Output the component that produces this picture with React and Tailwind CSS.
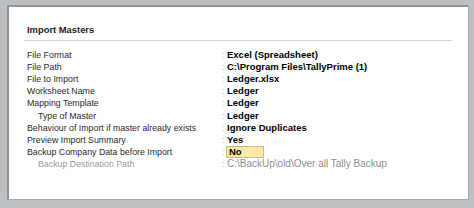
export default function App() {
  const rows = [
    { label: "File Format", value: "Excel (Spreadsheet)" },
    { label: "File Path", value: "C:\\Program Files\\TallyPrime (1)" },
    { label: "File to Import", value: "Ledger.xlsx" },
    { label: "Worksheet Name", value: "Ledger" },
    { label: "Mapping Template", value: "Ledger" },
    { label: "Type of Master", value: "Ledger", indent: true },
    { label: "Behaviour of Import if master already exists", value: "Ignore Duplicates" },
    { label: "Preview Import Summary", value: "Yes" },
    { label: "Backup Company Data before Import", value: "No", active: true },
    { label: "Backup Destination Path", value: "C:\\BackUp\\old\\Over all Tally Backup", indent: true, muted: true },
  ];
  return (
    <div className="w-[474px] h-[208px] bg-[#bcc0c4] pt-[5px] pl-[7px] overflow-hidden" style={{ fontFamily: '"Liberation Sans", Arial, sans-serif' }}>
      <div className="w-[462px] h-[195px] bg-white border-l-2 border-t-2 border-l-[#8e9296] border-t-[#8e9296] border-r border-b border-r-[#a6aaae] border-b-[#a6aaae] pl-[18px] pr-[16px] pt-[16px]">
        <div className="text-[9.4px] font-bold text-[#222] leading-[14px]">Import Masters</div>
        <div className="h-px bg-[#d4d4d4] mt-[3px] -ml-[3px]"></div>
        <div className="mt-[8px] flex flex-col">
          {rows.map((r, i) => (
            <div key={i} className="flex items-center h-[12.1px] leading-[12px]">
              <div className={`w-[195px] shrink-0 text-[8.8px] ${r.indent ? "pl-[11px]" : ""} ${r.muted ? "text-[#9a9a9a]" : "text-[#2a2a2a]"}`}>{r.label}</div>
              <div className="w-[5px] shrink-0 text-[9px] text-[#b0b0b0]">:</div>
              {r.active ? (
                <div className="ml-[-1px] w-[38px] h-[12px] bg-[#fde7a6] border border-[#c9b98a] pl-[2px] text-[9.5px] font-bold text-black leading-[10px]">{r.value}</div>
              ) : (
                <div className={`${r.muted ? "text-[#8e8e8e] text-[10px]" : "font-bold text-black text-[9.5px]"}`}>{r.value}</div>
              )}
            </div>
          ))}
        </div>
      </div>
    </div>
  );
}
